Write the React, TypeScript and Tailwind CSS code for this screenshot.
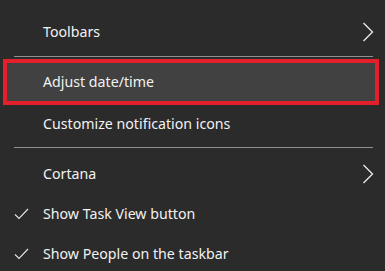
import * as React from "react";

/* ─── Glyphs ─────────────────────────────────────────── */
const Chevron = () => (
  <svg width="12" height="20" viewBox="0 0 12 20" fill="none" className="shrink-0">
    <path d="M1.5 1 L10.5 10 L1.5 19" stroke="#ececec" strokeWidth="1.3" />
  </svg>
);

const Check = () => (
  <svg width="15" height="12" viewBox="0 0 15 12" fill="none" className="shrink-0">
    <path d="M1 6.5 L5 10.5 L14 1" stroke="#e6e6e6" strokeWidth="1.1" />
  </svg>
);

/* ─── Menu row ───────────────────────────────────────── */
function Row({
  label,
  checked,
  submenu,
  className = "h-10",
}: {
  label: string;
  checked?: boolean;
  submenu?: boolean;
  className?: string;
}) {
  return (
    <div className={"flex items-center pl-[14px] pr-[11px] " + className}>
      <div className="w-[29px] flex items-center">{checked && <Check />}</div>
      <span className="flex-1 text-[14.2px] text-[#f2f2f2]">{label}</span>
      {submenu && <Chevron />}
    </div>
  );
}

const Separator = ({ className }: { className: string }) => (
  <div className={"mx-[14px] mr-[12px] h-px bg-[#8f8f8f] " + className} />
);

export default function App() {
  return (
    <div
      className="w-[385px] h-[271px] overflow-hidden bg-[#2b2b2b] pt-[12px]"
      style={{ fontFamily: '"Noto Sans", "Open Sans", sans-serif' }}
    >
      <Row label="Toolbars" submenu />
      <Separator className="mt-[4px] mb-[2px]" />

      {/* highlighted item */}
      <div className="mx-[3px] mr-[6px] h-[46px] border-4 border-[#e3202b] bg-[#414141] flex items-center pl-[36px]">
        <span className="text-[14.2px] text-[#f2f2f2]">Adjust date/time</span>
      </div>

      <Row label="Customize notification icons" className="h-[37px]" />
      <Separator className="mt-[5px] mb-[6px]" />

      <Row label="Cortana" submenu />
      <Row label="Show Task View button" checked />
      <Row label="Show People on the taskbar" checked />
    </div>
  );
}
